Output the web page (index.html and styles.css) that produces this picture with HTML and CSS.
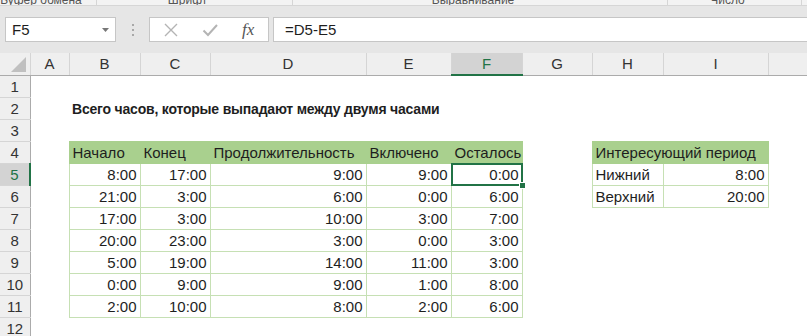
FILE: index.html
```html
<!DOCTYPE html>
<html lang="ru">
<head>
	<meta charset="UTF-8">
	<title>Всего часов</title>
	<link rel="stylesheet" href="styles.css">
</head>
<body>
	<div class="ribbon">
		<div class="grp g1"><span>Буфер обмена</span></div>
		<div class="grp g2"><span>Шрифт</span></div>
		<div class="grp g3"><span>Выравнивание</span></div>
		<div class="grp g4"><span>Число</span></div>
	</div>
	<div class="fbar">
		<div class="namebox">
			<span>F5</span>
			<svg class="arr" width="7" height="4" viewBox="0 0 7 4"><polygon points="0,0 7,0 3.5,4" fill="#777"/></svg>
		</div>
		<div class="dots"><i></i><i></i><i></i></div>
		<div class="fxbox">
			<svg width="16" height="16" viewBox="0 0 16 16"><path d="M2 2 L14 14 M14 2 L2 14" stroke="#b4b4b4" stroke-width="1.4" fill="none"/></svg>
			<svg width="16" height="16" viewBox="0 0 16 16"><path d="M1.5 8.5 L6 13 L15 3" stroke="#b4b4b4" stroke-width="2" fill="none"/></svg>
			<span class="fx">fx</span>
		</div>
		<div class="formula">=D5-E5</div>
	</div>
	<table class="sheet">
		<colgroup>
			<col style="width:30px"><col style="width:39px"><col style="width:71px"><col style="width:70px">
			<col style="width:156px"><col style="width:85px"><col style="width:71px"><col style="width:70px">
			<col style="width:71px"><col style="width:105px"><col style="width:39px">
		</colgroup>
		<tr class="heads">
			<th class="corner"><svg width="17" height="16" viewBox="0 0 17 16"><polygon points="16,0 16,15 1,15" fill="#c0c0c0"/></svg></th>
			<th>A</th><th>B</th><th>C</th><th>D</th><th>E</th><th class="on">F</th><th>G</th><th>H</th><th>I</th><th></th>
		</tr>
		<tr><th class="rn">1</th><td></td><td></td><td></td><td></td><td></td><td></td><td></td><td></td><td></td><td></td></tr>
		<tr><th class="rn">2</th><td></td><td class="title">Всего часов, которые выпадают между двумя часами</td><td></td><td></td><td></td><td></td><td></td><td></td><td></td><td></td></tr>
		<tr><th class="rn">3</th><td></td><td></td><td></td><td></td><td></td><td></td><td></td><td></td><td></td><td></td></tr>
		<tr><th class="rn">4</th><td></td>
			<td class="hd">Начало</td><td class="hd">Конец</td><td class="hd">Продолжительность</td><td class="hd">Включено</td><td class="hd">Осталось</td>
			<td></td><td class="hd" colspan="2">Интересующий период</td><td></td></tr>
		<tr><th class="rn on">5</th><td></td>
			<td class="v">8:00</td><td class="v">17:00</td><td class="v">9:00</td><td class="v">9:00</td><td class="v sel">0:00</td>
			<td></td><td class="v lbl">Нижний</td><td class="v">8:00</td><td></td></tr>
		<tr><th class="rn">6</th><td></td>
			<td class="v">21:00</td><td class="v">3:00</td><td class="v">6:00</td><td class="v">0:00</td><td class="v">6:00</td>
			<td></td><td class="v lbl">Верхний</td><td class="v">20:00</td><td></td></tr>
		<tr><th class="rn">7</th><td></td>
			<td class="v">17:00</td><td class="v">3:00</td><td class="v">10:00</td><td class="v">3:00</td><td class="v">7:00</td>
			<td></td><td></td><td></td><td></td></tr>
		<tr><th class="rn">8</th><td></td>
			<td class="v">20:00</td><td class="v">23:00</td><td class="v">3:00</td><td class="v">0:00</td><td class="v">3:00</td>
			<td></td><td></td><td></td><td></td></tr>
		<tr><th class="rn">9</th><td></td>
			<td class="v">5:00</td><td class="v">19:00</td><td class="v">14:00</td><td class="v">11:00</td><td class="v">3:00</td>
			<td></td><td></td><td></td><td></td></tr>
		<tr><th class="rn">10</th><td></td>
			<td class="v">0:00</td><td class="v">9:00</td><td class="v">9:00</td><td class="v">1:00</td><td class="v">8:00</td>
			<td></td><td></td><td></td><td></td></tr>
		<tr><th class="rn">11</th><td></td>
			<td class="v">2:00</td><td class="v">10:00</td><td class="v">8:00</td><td class="v">2:00</td><td class="v">6:00</td>
			<td></td><td></td><td></td><td></td></tr>
		<tr><th class="rn">12</th><td></td><td></td><td></td><td></td><td></td><td></td><td></td><td></td><td></td><td></td></tr>
	</table>
</body>
</html>
```

FILE: styles.css
```css
body{
	margin: 0;
	width: 807px;
	height: 336px;
	overflow: hidden;
	background: #fff;
	font-family: "Liberation Sans", Arial, sans-serif;
	color: #1e1e1e;
}
.ribbon{
	display: flex;
	height: 5px;
	overflow: hidden;
	background: #f3f3f3;
	border-bottom: 1px solid #d6d6d6;
	font-size: 12px;
	color: #555;
}
.grp{
	display: flex;
	justify-content: center;
	align-items: flex-end;
	border-right: 1px solid #d6d6d6;
	padding-right: 14px;
	box-sizing: border-box;
}
.grp span{
	line-height: 12px;
	flex: none;
	margin-bottom: -1px;
}
.g1{ width: 97px; }
.g2{ width: 196px; }
.g3{ width: 375px; }
.g4{ width: 134px; }
.fbar{
	display: flex;
	height: 25px;
	padding: 11px 0;
	background: #e6e6e6;
}
.namebox{
	width: 111px;
	margin-left: 5px;
	box-sizing: border-box;
	background: #fff;
	border: 1px solid #c6c6c6;
	display: flex;
	align-items: center;
	justify-content: space-between;
	padding: 0 6px 0 6px;
	font-size: 15px;
}
.dots{
	width: 33px;
	display: flex;
	flex-direction: column;
	align-items: center;
	justify-content: center;
	gap: 3px;
}
.dots i{
	width: 2px;
	height: 2px;
	background: #a8a8a8;
}
.fxbox{
	width: 120px;
	box-sizing: border-box;
	background: #fff;
	border: 1px solid #c6c6c6;
	display: flex;
	align-items: center;
	padding: 0 8px 0 13px;
	gap: 23px;
}
.fx{
	font-family: "Liberation Serif", serif;
	font-style: italic;
	font-size: 17px;
	color: #555;
	margin-left: 1px;
}
.formula{
	flex: 1;
	margin-left: 4px;
	box-sizing: border-box;
	background: #fff;
	border: 1px solid #c6c6c6;
	border-right: none;
	padding-left: 11px;
	line-height: 23px;
	font-size: 15px;
}
.sheet{
	border-collapse: collapse;
	table-layout: fixed;
	width: 807px;
	font-size: 15px;
}
.sheet tr{
	height: 22px;
}
.sheet td{
	padding: 0 3px 1px;
	vertical-align: bottom;
	white-space: nowrap;
	line-height: 18px;
}
.heads th{
	height: 21px;
	padding: 0;
	background: #efefef;
	border-right: 1px solid #d5d5d5;
	border-bottom: 1px solid #ababab;
	font-weight: normal;
	font-size: 15px;
	color: #333;
}
.heads th.on{
	background: #d3d3d3;
	color: #217346;
	border-bottom: 2px solid #217346;
}
.corner{
	text-align: right;
	vertical-align: bottom;
}
.corner svg{
	display: block;
	margin: 0 3px 2px auto;
}
.rn{
	padding: 0;
	background: #efefef;
	border-right: 1px solid #ababab;
	border-bottom: 1px solid #d5d5d5;
	font-weight: normal;
	color: #333;
	text-align: center;
}
.rn.on{
	background: #d3d3d3;
	color: #217346;
	border-right: 2px solid #217346;
}
.title{
	font-weight: bold;
	font-size: 14px;
	letter-spacing: -0.2px;
	overflow: visible;
}
.hd{
	background: #a9d08e;
	border: 1px solid #a9d08e;
	text-align: left;
}
.v{
	border: 1px solid #c6e0b4;
	text-align: right;
}
.v.lbl{
	text-align: left;
}
.sel{
	position: relative;
}
.sel::after{
	content: "";
	position: absolute;
	left: -1px;
	top: -1px;
	right: -1px;
	bottom: -1px;
	border: 2px solid #217346;
}
.sel::before{
	content: "";
	position: absolute;
	right: -4px;
	bottom: -4px;
	width: 5px;
	height: 5px;
	background: #217346;
	border: 1px solid #fff;
	z-index: 1;
}
```
